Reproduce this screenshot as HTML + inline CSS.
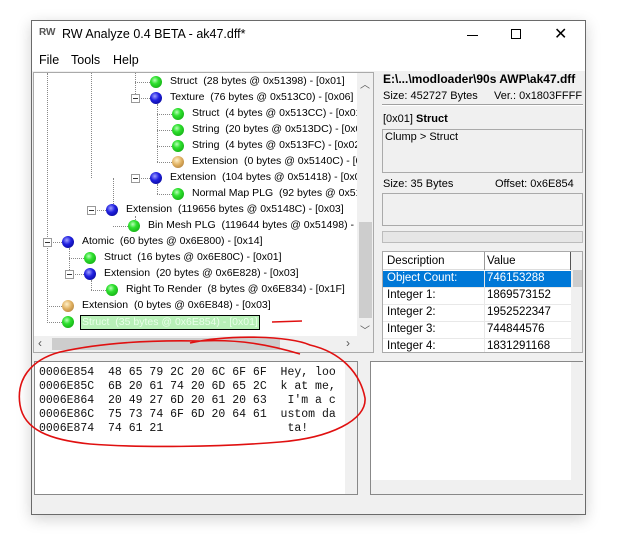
<!DOCTYPE html>
<html><head><meta charset="utf-8"><style>
*{margin:0;padding:0;box-sizing:border-box}
body{width:621px;height:544px;background:#fff;position:relative;overflow:hidden;font-family:"Liberation Sans",sans-serif;font-size:11px;color:#000}
.a{position:absolute}
.win{left:31px;top:20px;width:555px;height:495px;border:1px solid #6a6a6a;background:#f0f0f0;box-shadow:0 4px 14px rgba(0,0,0,.18)}
.t{white-space:nowrap}
.tree .t{font-size:10.5px}
.ball{position:absolute;width:12px;height:12px;border-radius:50%}
.g{background:radial-gradient(circle at 40% 35%,#b8ffb8 0,#2ee02e 35%,#0a9a0a 100%)}
.b{background:radial-gradient(circle at 40% 35%,#a0a0ff 0,#2020e0 40%,#000080 100%)}
.o{background:radial-gradient(circle at 40% 35%,#fff0c8 0,#e0b060 45%,#a07030 100%)}
.dv{position:absolute;width:0;border-left:1px dotted #888}
.dh{position:absolute;height:0;border-top:1px dotted #888}
.pm{position:absolute;width:9px;height:9px;border:1px solid #999;background:#fff}
.pm:after{content:"";position:absolute;left:1px;top:3px;width:5px;height:1px;background:#333}
.mono{font-family:"Liberation Mono",monospace;font-size:11.5px}
</style></head><body>
<div class="a win"></div>
<div class="a" style="left:32px;top:21px;width:553px;height:50px;background:#fff"></div>
<div class="a t" style="left:39px;top:27px;font-size:10px;font-weight:bold;color:#555">RW</div>
<div class="a t" style="left:62px;top:27px;font-size:12.5px">RW Analyze 0.4 BETA - ak47.dff*</div>
<div class="a" style="left:467px;top:35px;width:11px;height:1px;background:#000"></div>
<div class="a" style="left:511px;top:29px;width:10px;height:10px;border:1px solid #000"></div>
<div class="a t" style="left:554px;top:24px;font-size:16px">✕</div>
<div class="a t" style="left:39px;top:53px;font-size:12.5px">File</div>
<div class="a t" style="left:71px;top:53px;font-size:12.5px">Tools</div>
<div class="a t" style="left:113px;top:53px;font-size:12.5px">Help</div>
<div class="a" style="left:33px;top:72px;width:341px;height:281px;border:1px solid #aaa;background:#fff"></div>
<div class="a" style="left:357px;top:73px;width:16px;height:263px;background:#f0f0f0"></div>
<div class="a" style="left:359px;top:222px;width:13px;height:96px;background:#cdcdcd"></div>
<div class="a t" style="left:360px;top:76px;color:#555;font-size:10px">︿</div>
<div class="a t" style="left:360px;top:322px;color:#555;font-size:10px">﹀</div>
<div class="a" style="left:34px;top:336px;width:339px;height:16px;background:#f0f0f0"></div>
<div class="a" style="left:52px;top:338px;width:228px;height:12px;background:#cdcdcd"></div>
<div class="a t" style="left:38px;top:336px;color:#555;font-size:12px">‹</div>
<div class="a t" style="left:346px;top:336px;color:#555;font-size:12px">›</div>
<div class="a tree" style="left:34px;top:73px;width:323px;height:263px;overflow:hidden">
<div style="position:relative;left:-34px;top:-73px">
<div class="dv" style="left:47px;top:73px;height:250px"></div>
<div class="dv" style="left:91px;top:73px;height:105px"></div>
<div class="dv" style="left:135px;top:73px;height:25px"></div>
<div class="dv" style="left:157px;top:104px;height:58px"></div>
<div class="dv" style="left:113px;top:178px;height:32px"></div>
<div class="dv" style="left:135px;top:216px;height:10px"></div>
<div class="dv" style="left:69px;top:248px;height:26px"></div>
<div class="dv" style="left:91px;top:280px;height:10px"></div>
<div class="dv" style="left:157px;top:184px;height:10px"></div>
<div class="dh" style="left:135px;top:82px;width:15px"></div><div class="ball g" style="left:150px;top:76px"></div><div class="a t" style="left:170px;top:75px">Struct&nbsp; (28 bytes @ 0x51398) - [0x01]</div>
<div class="pm" style="left:131px;top:94px"></div><div class="dh" style="left:141px;top:98px;width:9px"></div><div class="ball b" style="left:150px;top:92px"></div><div class="a t" style="left:170px;top:91px">Texture&nbsp; (76 bytes @ 0x513C0) - [0x06]</div>
<div class="dh" style="left:157px;top:114px;width:15px"></div><div class="ball g" style="left:172px;top:108px"></div><div class="a t" style="left:192px;top:107px">Struct&nbsp; (4 bytes @ 0x513CC) - [0x01]</div>
<div class="dh" style="left:157px;top:130px;width:15px"></div><div class="ball g" style="left:172px;top:124px"></div><div class="a t" style="left:192px;top:123px">String&nbsp; (20 bytes @ 0x513DC) - [0x02]</div>
<div class="dh" style="left:157px;top:146px;width:15px"></div><div class="ball g" style="left:172px;top:140px"></div><div class="a t" style="left:192px;top:139px">String&nbsp; (4 bytes @ 0x513FC) - [0x02]</div>
<div class="dh" style="left:157px;top:162px;width:15px"></div><div class="ball o" style="left:172px;top:156px"></div><div class="a t" style="left:192px;top:155px">Extension&nbsp; (0 bytes @ 0x5140C) - [0x03]</div>
<div class="pm" style="left:131px;top:174px"></div><div class="dh" style="left:141px;top:178px;width:9px"></div><div class="ball b" style="left:150px;top:172px"></div><div class="a t" style="left:170px;top:171px">Extension&nbsp; (104 bytes @ 0x51418) - [0x03]</div>
<div class="dh" style="left:157px;top:194px;width:15px"></div><div class="ball g" style="left:172px;top:188px"></div><div class="a t" style="left:192px;top:187px">Normal Map PLG&nbsp; (92 bytes @ 0x51424)</div>
<div class="pm" style="left:87px;top:206px"></div><div class="dh" style="left:97px;top:210px;width:9px"></div><div class="ball b" style="left:106px;top:204px"></div><div class="a t" style="left:126px;top:203px">Extension&nbsp; (119656 bytes @ 0x5148C) - [0x03]</div>
<div class="dh" style="left:113px;top:226px;width:15px"></div><div class="ball g" style="left:128px;top:220px"></div><div class="a t" style="left:148px;top:219px">Bin Mesh PLG&nbsp; (119644 bytes @ 0x51498) - [0x50E]</div>
<div class="pm" style="left:43px;top:238px"></div><div class="dh" style="left:53px;top:242px;width:9px"></div><div class="ball b" style="left:62px;top:236px"></div><div class="a t" style="left:82px;top:235px">Atomic&nbsp; (60 bytes @ 0x6E800) - [0x14]</div>
<div class="dh" style="left:69px;top:258px;width:15px"></div><div class="ball g" style="left:84px;top:252px"></div><div class="a t" style="left:104px;top:251px">Struct&nbsp; (16 bytes @ 0x6E80C) - [0x01]</div>
<div class="pm" style="left:65px;top:270px"></div><div class="dh" style="left:75px;top:274px;width:9px"></div><div class="ball b" style="left:84px;top:268px"></div><div class="a t" style="left:104px;top:267px">Extension&nbsp; (20 bytes @ 0x6E828) - [0x03]</div>
<div class="dh" style="left:91px;top:290px;width:15px"></div><div class="ball g" style="left:106px;top:284px"></div><div class="a t" style="left:126px;top:283px">Right To Render&nbsp; (8 bytes @ 0x6E834) - [0x1F]</div>
<div class="dh" style="left:47px;top:306px;width:15px"></div><div class="ball o" style="left:62px;top:300px"></div><div class="a t" style="left:82px;top:299px">Extension&nbsp; (0 bytes @ 0x6E848) - [0x03]</div>
<div class="dh" style="left:47px;top:322px;width:15px"></div><div class="ball g" style="left:62px;top:316px"></div><div class="a t" style="left:80px;top:315px;background:#b8f0b8;color:#e8ffe8;border:1px solid #000;padding:0 1px;height:15px">Struct&nbsp; (35 bytes @ 0x6E854) - [0x01]</div>
</div></div>
<div class="a t" style="left:383px;top:72px;font-weight:bold;font-size:12px;width:200px;overflow:hidden">E:\...\modloader\90s AWP\ak47.dff</div>
<div class="a t" style="left:383px;top:90px">Size: 452727 Bytes</div>
<div class="a t" style="left:494px;top:90px">Ver.: 0x1803FFFF</div>
<div class="a" style="left:382px;top:104px;width:201px;height:2px;border-top:1px solid #a0a0a0;border-bottom:1px solid #fff"></div>
<div class="a t" style="left:383px;top:113px">[0x01] <b>Struct</b></div>
<div class="a" style="left:382px;top:129px;width:201px;height:44px;border:1px solid #aaa;background:#f0f0f0"></div>
<div class="a t" style="left:385px;top:131px">Clump &gt; Struct</div>
<div class="a t" style="left:383px;top:178px">Size: 35 Bytes</div>
<div class="a t" style="left:495px;top:178px">Offset: 0x6E854</div>
<div class="a" style="left:382px;top:193px;width:201px;height:33px;border:1px solid #aaa;background:#f0f0f0"></div>
<div class="a" style="left:382px;top:231px;width:201px;height:12px;border:1px solid #bcbcbc;background:#e6e6e6"></div>
<div class="a" style="left:382px;top:251px;width:201px;height:102px;border:1px solid #aaa;background:#fff;overflow:hidden">
<div class="a" style="left:0;top:0;width:188px;height:18px;background:#fff;border-bottom:1px solid #ddd"></div>
<div class="a" style="left:101px;top:0;width:1px;height:18px;background:#999"></div>
<div class="a" style="left:187px;top:0;width:1px;height:18px;background:#555"></div>
<div class="a t" style="left:4px;top:3px;font-size:11.5px">Description</div>
<div class="a t" style="left:104px;top:3px;font-size:11.5px">Value</div>
<div class="a" style="left:188px;top:0;width:12px;height:100px;background:#f0f0f0"></div>
<div class="a" style="left:190px;top:18px;width:9px;height:17px;background:#cdcdcd"></div>
<div class="a" style="left:0;top:19px;width:188px;height:16px;background:#0078d7"></div>
<div class="a t" style="left:4px;top:20px;color:#fff;font-size:11.5px">Object Count:</div><div class="a t" style="left:104px;top:20px;color:#fff;font-size:11.5px">746153288</div>
<div class="a" style="left:0;top:35px;width:188px;height:1px;background:#e8e8e8"></div>
<div class="a t" style="left:4px;top:37px;font-size:11.5px">Integer 1:</div><div class="a t" style="left:104px;top:37px;font-size:11.5px">1869573152</div>
<div class="a" style="left:0;top:52px;width:188px;height:1px;background:#e8e8e8"></div>
<div class="a t" style="left:4px;top:54px;font-size:11.5px">Integer 2:</div><div class="a t" style="left:104px;top:54px;font-size:11.5px">1952522347</div>
<div class="a" style="left:0;top:69px;width:188px;height:1px;background:#e8e8e8"></div>
<div class="a t" style="left:4px;top:71px;font-size:11.5px">Integer 3:</div><div class="a t" style="left:104px;top:71px;font-size:11.5px">744844576</div>
<div class="a" style="left:0;top:86px;width:188px;height:1px;background:#e8e8e8"></div>
<div class="a t" style="left:4px;top:88px;font-size:11.5px">Integer 4:</div><div class="a t" style="left:104px;top:88px;font-size:11.5px">1831291168</div>
<div class="a" style="left:101px;top:19px;width:1px;height:83px;background:#e8e8e8"></div>
</div>
<div class="a" style="left:34px;top:361px;width:324px;height:134px;border:1px solid #888;background:#fff"></div>
<div class="a" style="left:345px;top:362px;width:12px;height:132px;background:#f0f0f0"></div>
<div class="a mono t" style="left:39px;top:366px;line-height:14px;color:#111">0006E854&nbsp; 48 65 79 2C 20 6C 6F 6F&nbsp; Hey, loo<br>0006E85C&nbsp; 6B 20 61 74 20 6D 65 2C&nbsp; k at me,<br>0006E864&nbsp; 20 49 27 6D 20 61 20 63&nbsp; &nbsp;I'm a c<br>0006E86C&nbsp; 75 73 74 6F 6D 20 64 61&nbsp; ustom da<br>0006E874&nbsp; 74 61 21 &nbsp; &nbsp; &nbsp; &nbsp; &nbsp; &nbsp; &nbsp; &nbsp; &nbsp;ta!</div>
<div class="a" style="left:370px;top:361px;width:213px;height:134px;border:1px solid #888;background:#fff"></div>
<div class="a" style="left:571px;top:362px;width:12px;height:118px;background:#f0f0f0"></div>
<div class="a" style="left:371px;top:480px;width:212px;height:14px;background:#f0f0f0"></div>
<svg class="a" style="left:0;top:0" width="621" height="544">
<g fill="none" stroke="#e01010" stroke-width="1.6">
<path d="M272 322 L302 321"/>
<path d="M190 343 C230 334 290 336 310 345 C340 352 360 372 365 398 C367 420 330 438 280 442 C220 447 140 448 90 444 C50 440 24 430 20 405 C16 380 30 360 60 352 C100 343 150 340 200 341 C240 339 270 345 300 354"/>
</g></svg>
</body></html>
